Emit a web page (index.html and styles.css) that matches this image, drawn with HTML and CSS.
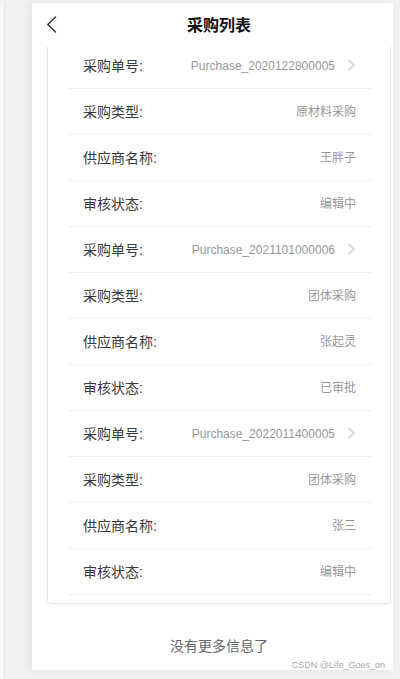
FILE: index.html
```html
<!DOCTYPE html>
<html lang="zh">
<head>
<meta charset="utf-8">
<title>采购列表</title>
<link rel="stylesheet" href="styles.css">
</head>
<body>
<div class="stage">
  <div class="rail"></div>
  <div class="panel">
    <header class="nav">
      <span class="back">
        <svg width="11" height="17" viewBox="0 0 11 17"><path d="M9.5 1 L1.8 8.5 L9.5 16" fill="none" stroke="#333" stroke-width="1.5" stroke-linecap="round" stroke-linejoin="round"/></svg>
      </span>
      <h1 class="title">采购列表</h1>
    </header>
    <div class="scroll">
      <div class="card">
        <div class="row"><span class="label">采购单号:</span><span class="value">Purchase_2020122800005<svg class="arrow" width="9" height="12" viewBox="0 0 9 12"><path d="M1.5 1 L7 6 L1.5 11" fill="none" stroke="#c8c9cc" stroke-width="1.3"/></svg></span></div>
        <div class="row"><span class="label">采购类型:</span><span class="value">原材料采购</span></div>
        <div class="row"><span class="label">供应商名称:</span><span class="value">王胖子</span></div>
        <div class="row"><span class="label">审核状态:</span><span class="value">编辑中</span></div>
        <div class="row"><span class="label">采购单号:</span><span class="value">Purchase_2021101000006<svg class="arrow" width="9" height="12" viewBox="0 0 9 12"><path d="M1.5 1 L7 6 L1.5 11" fill="none" stroke="#c8c9cc" stroke-width="1.3"/></svg></span></div>
        <div class="row"><span class="label">采购类型:</span><span class="value">团体采购</span></div>
        <div class="row"><span class="label">供应商名称:</span><span class="value">张起灵</span></div>
        <div class="row"><span class="label">审核状态:</span><span class="value">已审批</span></div>
        <div class="row"><span class="label">采购单号:</span><span class="value">Purchase_2022011400005<svg class="arrow" width="9" height="12" viewBox="0 0 9 12"><path d="M1.5 1 L7 6 L1.5 11" fill="none" stroke="#c8c9cc" stroke-width="1.3"/></svg></span></div>
        <div class="row"><span class="label">采购类型:</span><span class="value">团体采购</span></div>
        <div class="row"><span class="label">供应商名称:</span><span class="value">张三</span></div>
        <div class="row"><span class="label">审核状态:</span><span class="value">编辑中</span></div>
      </div>
    </div>
    <div class="more">没有更多信息了</div>
    <div class="mark">CSDN @Life_Goes_on</div>
  </div>
</div>
</body>
</html>
```
FILE: styles.css
```css
html, body {
  margin: 0;
  padding: 0;
}
body {
  background: #f2f2f2;
  font-family: "Liberation Sans", "Noto Sans CJK SC", sans-serif;
  width: 400px;
  height: 679px;
  overflow: hidden;
}
.stage {
  display: flex;
  padding-top: 3px;
  height: 676px;
}
.rail {
  width: 4px;
  border-right: 1px solid #e6e6e6;
  background: #f8f8f8;
  margin-right: 27px;
}
.panel {
  width: 361px;
  height: 667px;
  background: #fff;
  box-shadow: -3px 0 9px rgba(0, 0, 0, 0.07);
  display: flex;
  flex-direction: column;
  overflow: hidden;
}
.nav {
  height: 44px;
  display: flex;
  align-items: center;
  padding-left: 14px;
  padding-right: 12px;
  flex-shrink: 0;
  position: relative;
  z-index: 2;
  background: #fff;
}
.back {
  display: flex;
  width: 11px;
  height: 17px;
  margin-top: -1px;
}
.title {
  flex: 1;
  margin: 0;
  text-align: center;
  font-size: 16px;
  font-weight: bold;
  color: #111;
  line-height: 20px;
  margin-top: 2px;
}
.scroll {
  overflow: hidden;
  padding: 0 0 8px 15px;
  flex-shrink: 0;
}
.card {
  width: 344px;
  box-sizing: border-box;
  margin-top: -5px;
  border: 1px solid #e6e6e6;
  border-radius: 4px;
  box-shadow: 0 1px 4px rgba(0, 0, 0, 0.06);
  padding: 0 18px 8px 20px;
  background: #fff;
}
.row {
  height: 45px;
  border-bottom: 1px solid #eeeff2;
  display: flex;
  align-items: center;
  justify-content: space-between;
  padding: 0 16px 0 15px;
}
.label {
  font-size: 14px;
  color: #3a3a3a;
  line-height: 20px;
}
.value {
  display: flex;
  align-items: center;
  font-size: 12px;
  color: #969799;
  line-height: 16px;
}
.arrow {
  margin-left: 12px;
  margin-top: -1px;
}
.more {
  margin-top: 24px;
  text-align: center;
  font-size: 14px;
  line-height: 20px;
  color: #666;
  padding-left: 13px;
}
.mark {
  margin-top: 4px;
  text-align: right;
  padding-right: 8px;
  font-size: 9px;
  line-height: 11px;
  color: #a8a8a8;
}
```
